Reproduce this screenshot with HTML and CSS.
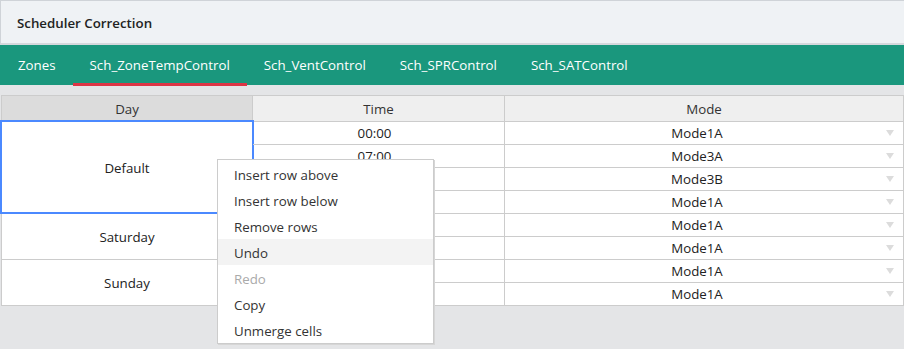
FILE: index.html
```html
<!DOCTYPE html>
<html>
<head>
<meta charset="utf-8">
<link rel="stylesheet" href="styles.css">
</head>
<body>
<div class="page">
  <div class="panel-header">Scheduler Correction</div>
  <nav class="tabs">
    <span class="tab">Zones</span>
    <span class="tab active">Sch_ZoneTempControl</span>
    <span class="tab">Sch_VentControl</span>
    <span class="tab">Sch_SPRControl</span>
    <span class="tab">Sch_SATControl</span>
  </nav>
  <div class="grid-wrap">
    <div class="grid">
      <div class="hd hd-sel">Day</div>
      <div class="hd">Time</div>
      <div class="hd">Mode</div>

      <div class="day span4">Default<span class="selection"></span></div>
      <div class="time">00:00</div>
      <div class="mode">Mode1A<span class="arrow"></span></div>
      <div class="time">07:00</div>
      <div class="mode">Mode3A<span class="arrow"></span></div>
      <div class="time">17:00</div>
      <div class="mode">Mode3B<span class="arrow"></span></div>
      <div class="time">22:00</div>
      <div class="mode">Mode1A<span class="arrow"></span></div>

      <div class="day span2">Saturday</div>
      <div class="time">00:00</div>
      <div class="mode">Mode1A<span class="arrow"></span></div>
      <div class="time">12:00</div>
      <div class="mode">Mode1A<span class="arrow"></span></div>

      <div class="day span2">Sunday</div>
      <div class="time">00:00</div>
      <div class="mode">Mode1A<span class="arrow"></span></div>
      <div class="time">12:00</div>
      <div class="mode">Mode1A<span class="arrow"></span></div>
    </div>
  </div>
  <ul class="context-menu">
    <li>Insert row above</li>
    <li>Insert row below</li>
    <li>Remove rows</li>
    <li class="hover">Undo</li>
    <li class="disabled">Redo</li>
    <li>Copy</li>
    <li>Unmerge cells</li>
  </ul>
</div>
</body>
</html>
```

FILE: styles.css
```css
html, body {
  margin: 0;
  padding: 0;
}
body {
  background: #e4e5e7;
  font-family: "Open Sans", "Noto Sans", sans-serif;
  font-size: 13.3px;
  color: #333;
}
.page {
  position: relative;
  width: 904px;
  height: 349px;
  overflow: hidden;
}
.panel-header {
  height: 42px;
  line-height: 45px;
  background: #eff2f5;
  border-top: 1px solid #cfd3d8;
  border-left: 1px solid #cfd3d8;
  border-bottom: 2px solid #d5d8dc;
  padding-left: 16px;
  font-weight: 600;
  color: #222;
  box-sizing: content-box;
  overflow: hidden;
}
.tabs {
  display: flex;
  height: 40px;
  background: #1a977d;
  padding-left: 1px;
}
.tab {
  padding: 0 17px;
  line-height: 40px;
  color: #fff;
  position: relative;
}
.tab.active::after {
  content: "";
  position: absolute;
  left: 0;
  right: 0;
  bottom: -1px;
  height: 3px;
  background: #dc3545;
}
.grid-wrap {
  margin-top: 10px;
  padding-left: 1px;
}
.grid {
  display: grid;
  grid-template-columns: 251px 252px 399px;
  grid-template-rows: 26px repeat(8, 23px);
  border-top: 1px solid #ccc;
  border-left: 1px solid #ccc;
  width: 902px;
  background: #fff;
}
.grid > div {
  border-right: 1px solid #ccc;
  border-bottom: 1px solid #ccc;
  display: flex;
  align-items: center;
  justify-content: center;
  color: #222;
  position: relative;
}
.grid > .hd {
  background: #efefef;
  color: #333;
}
.grid > .hd-sel {
  background: #dcdcdc;
}
.grid > .day {
  grid-column: 1;
}
.span4 { grid-row: span 4; }
.span2 { grid-row: span 2; }
.grid > .time {
  grid-column: 2;
  padding-right: 8px;
}
.grid > .mode {
  grid-column: 3;
  padding-right: 14px;
}
.selection {
  position: absolute;
  left: -2px;
  top: -2px;
  right: -2px;
  bottom: -1px;
  border: 2px solid #4b89ff;
  pointer-events: none;
}
.arrow {
  position: absolute;
  right: 9px;
  top: 8px;
  width: 0;
  height: 0;
  border-left: 4px solid transparent;
  border-right: 4px solid transparent;
  border-top: 6px solid #dcdcdc;
}
.context-menu {
  position: absolute;
  left: 217px;
  top: 159px;
  width: 215px;
  margin: 0;
  padding: 1px 0 0 0;
  list-style: none;
  background: #fff;
  border: 1px solid #ccc;
  box-shadow: 1px 1px 0 #d6d6d6;
}
.context-menu li {
  height: 26px;
  line-height: 28px;
  padding-left: 16px;
  color: #333;
}
.context-menu li.hover {
  background: #f3f3f3;
}
.context-menu li.disabled {
  color: #aaa;
}
```
